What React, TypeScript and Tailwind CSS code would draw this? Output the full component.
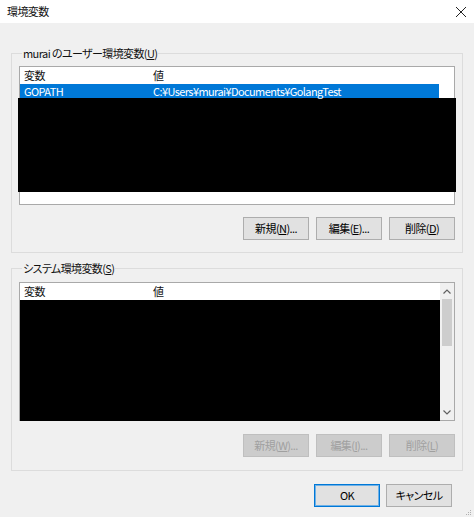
import React from "react";

const FONT =
  "font-['Noto_Sans_CJK_JP','Noto_Sans',sans-serif] [font-feature-settings:'palt'_1] tracking-[-0.6px]";

function Btn({
  children,
  disabled,
  primary,
}: {
  children: React.ReactNode;
  disabled?: boolean;
  primary?: boolean;
}) {
  const tone = disabled
    ? "border-[#bfbfbf] bg-[#cccccc] text-[#a0a0a0]"
    : primary
    ? "border-[#0078d7] bg-[#e1e1e1] text-black shadow-[inset_0_0_0_1px_#6fb1e6]"
    : "border-[#adadad] bg-[#e1e1e1] text-black";
  return (
    <div
      className={`flex h-[23px] w-[66px] items-center justify-center border text-[11px] leading-none ${tone}`}
    >
      {children}
    </div>
  );
}

function Chevron({ up }: { up?: boolean }) {
  return (
    <svg width="8" height="5" viewBox="0 0 8 5" className="block">
      <path
        d={up ? "M0.5 4.5 L4 1 L7.5 4.5" : "M0.5 0.5 L4 4 L7.5 0.5"}
        fill="none"
        stroke="#606060"
        strokeWidth="1.2"
      />
    </svg>
  );
}

function Header() {
  return (
    <div className="flex h-[17px] items-center bg-white text-[11px] leading-none">
      <div className="w-[129px] pl-[4px]">変数</div>
      <div className="pl-[4px]">値</div>
    </div>
  );
}

function GroupLabel({ children }: { children: React.ReactNode }) {
  return (
    <div className="-mt-[9px] ml-[3px] w-fit bg-[#f0f0f0] px-[1px] text-[11px] leading-[16px]">
      {children}
    </div>
  );
}

export default function App() {
  return (
    <div className={`h-[520px] w-[474px] bg-white text-[#111] ${FONT}`}>
      {/* title bar */}
      <div className="flex h-[23px] items-center justify-between pl-[7px] pr-[8px]">
        <span className="text-[11px] leading-none">環境変数</span>
        <svg width="10" height="10" viewBox="0 0 10 10" className="mt-[1px]">
          <path d="M0 0 L10 10 M10 0 L0 10" stroke="#222" strokeWidth="1" />
        </svg>
      </div>

      <div className="relative flex h-[494px] flex-col bg-[#f0f0f0] px-[11px] pt-[30px]">
        {/* user variables */}
        <div className="border border-[#dcdcdc] px-[7px] pb-[12px]">
          <GroupLabel>
            murai のユーザー環境変数(<u>U</u>)
          </GroupLabel>
          <div className="mt-[5px] h-[139px] border border-[#a9a9a9] bg-white">
            <div className="w-[419px]">
              <Header />
              <div className="flex h-[14px] items-center bg-[#0078d7] text-[11px] leading-none text-white">
                <div className="w-[129px] pl-[4px]">GOPATH</div>
                <div className="pl-[4px]">C:¥Users¥murai¥Documents¥GolangTest</div>
              </div>
            </div>
            <div className="-mx-[2px] h-[94px] bg-black" />
          </div>
          <div className="mt-[12px] flex justify-end gap-[7px]">
            <Btn>
              新規(<u>N</u>)...
            </Btn>
            <Btn>
              編集(<u>E</u>)...
            </Btn>
            <Btn>
              削除(<u>D</u>)
            </Btn>
          </div>
        </div>

        {/* system variables */}
        <div className="mt-[15px] border border-[#dcdcdc] px-[7px] pb-[13px]">
          <GroupLabel>
            システム環境変数(<u>S</u>)
          </GroupLabel>
          <div className="mt-[6px] flex h-[139px] border border-[#a9a9a9] bg-white">
            <div className="flex flex-1 flex-col">
              <Header />
              <div className="-mb-[1px] flex-1 bg-black" />
            </div>
            <div className="flex w-[14px] flex-col bg-[#f0f0f0]">
              <div className="flex h-[16px] items-center justify-center">
                <Chevron up />
              </div>
              <div className="mx-[2px] h-[47px] bg-[#cdcdcd]" />
              <div className="flex-1" />
              <div className="flex h-[16px] items-center justify-center">
                <Chevron />
              </div>
            </div>
          </div>
          <div className="mt-[13px] flex justify-end gap-[7px]">
            <Btn disabled>
              新規(<u>W</u>)...
            </Btn>
            <Btn disabled>
              編集(<u>I</u>)...
            </Btn>
            <Btn disabled>
              削除(<u>L</u>)
            </Btn>
          </div>
        </div>

        {/* dialog buttons */}
        <div className="mr-[11px] mt-[13px] flex justify-end gap-[6px]">
          <Btn primary>OK</Btn>
          <Btn>キャンセル</Btn>
        </div>

        {/* size grip */}
        <svg
          width="6"
          height="6"
          viewBox="0 0 6 6"
          className="absolute bottom-[1px] right-[2px]"
        >
          <rect x="4" y="0" width="1" height="1" fill="#b0b0b0" />
          <rect x="2" y="2" width="1" height="1" fill="#b0b0b0" />
          <rect x="4" y="2" width="1" height="1" fill="#b0b0b0" />
          <rect x="0" y="4" width="1" height="1" fill="#b0b0b0" />
          <rect x="2" y="4" width="1" height="1" fill="#b0b0b0" />
          <rect x="4" y="4" width="1" height="1" fill="#b0b0b0" />
        </svg>
      </div>
    </div>
  );
}
